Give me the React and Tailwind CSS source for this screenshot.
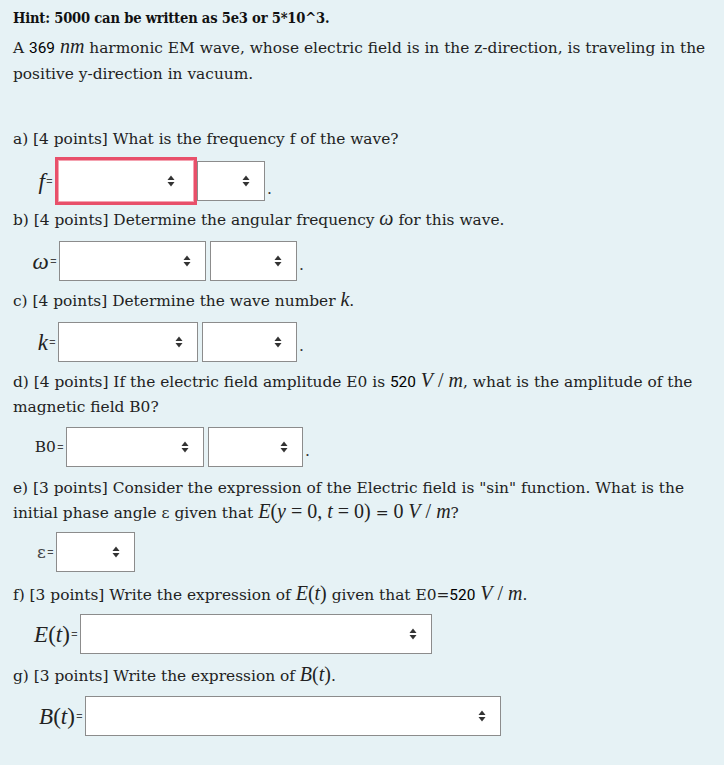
import React from 'react';

const serif = { fontFamily: '"DejaVu Serif", "Liberation Serif", serif' };
const mathFont = { fontFamily: '"Liberation Serif", "DejaVu Serif", serif' };

function Arrows() {
  return (
    <svg width="8" height="12" viewBox="0 0 8 12" className="shrink-0">
      <path d="M4 0.5 L7.5 5 L0.5 5 Z" fill="#333" />
      <path d="M4 11.5 L7.5 7 L0.5 7 Z" fill="#333" />
    </svg>
  );
}

function Select({ w, error }) {
  return (
    <div
      className={
        'flex items-center justify-end bg-white shrink-0 ' +
        (error
          ? 'h-[48px] border-[3px] border-[#e8506a] pr-[19px] shadow-[inset_0_0_0_1px_#f4a3b1]'
          : 'h-10 border border-[#8c8c8c] pr-[14px]')
      }
      style={{ width: w }}
    >
      <Arrows />
    </div>
  );
}

// math pieces (KaTeX-like)
function M({ children }) {
  return <span className="italic text-[20px] leading-none" style={mathFont}>{children}</span>;
}
function R({ children }) {
  return <span className="text-[20px] leading-none" style={mathFont}>{children}</span>;
}
function VM() {
  return (
    <span className="text-[20px] leading-none" style={mathFont}>
      <i>V</i> / <i>m</i>
    </span>
  );
}
// bigger math for the answer labels
function LM({ children }) {
  return <span className="italic text-[23px] leading-none" style={mathFont}>{children}</span>;
}
function LR({ children }) {
  return <span className="text-[23px] leading-none" style={mathFont}>{children}</span>;
}

function Num({ children }) {
  return <span className="text-black" style={{ fontFamily: 'Roboto, "Liberation Sans", sans-serif' }}>{children}</span>;
}

const eq = <span className="text-[13px] text-[#444] ml-[1px]" style={{ fontFamily: 'Roboto, sans-serif' }}>=</span>;

function Row({ label, labelW, className, children }) {
  return (
    <div className={'flex items-center ' + (className || '')}>
      <span className="flex items-center justify-end shrink-0 mr-[2px] whitespace-nowrap" style={{ width: labelW }}>
        {label}
      </span>
      {children}
    </div>
  );
}

function Dot() {
  return <span className="ml-[2px] self-end mb-[8px] leading-none text-[#333]">.</span>;
}

export default function App() {
  return (
    <div className="min-h-screen bg-[#e6f2f5] text-[#222] text-[15.4px] leading-[25px] pl-[13px] pr-2 pt-[5px] pb-6" style={serif}>
      <p className="font-bold text-[#111] font-stretch-condensed text-[14.6px] tracking-[-0.2px]">Hint: 5000 can be written as 5e3 or 5*10^3.</p>
      <p className="mt-[5px] leading-[26px]">
        A <Num>369</Num> <M>nm</M> harmonic EM wave, whose electric field is in the z-direction, is traveling in the positive y-direction in vacuum.
      </p>

      <p className="mt-[40px]">a) [4 points] What is the frequency f of the wave?</p>
      <Row className="mt-[5px]" labelW={40} label={<><LM>f</LM>{eq}</>}>
        <Select w={142} error />
        <Select w={68} />
        <Dot />
      </Row>

      <p className="mt-[3px]">b) [4 points] Determine the angular frequency <M>ω</M> for this wave.</p>
      <Row className="mt-[8px]" labelW={44} label={<><LM>ω</LM>{eq}</>}>
        <Select w={147} />
        <div className="w-1 shrink-0" />
        <Select w={87} />
        <Dot />
      </Row>

      <p className="mt-[8px]">c) [4 points] Determine the wave number <M>k</M>.</p>
      <Row className="mt-[8px]" labelW={43} label={<><LM>k</LM>{eq}</>}>
        <Select w={140} />
        <div className="w-1 shrink-0" />
        <Select w={95} />
        <Dot />
      </Row>

      <p className="mt-[8px]">
        d) [4 points] If the electric field amplitude E0 is <Num>520</Num> <VM />, what is the amplitude of the magnetic field B0?
      </p>
      <Row className="mt-[7px]" labelW={51} label={<>B0{eq}</>}>
        <Select w={138} />
        <div className="w-1 shrink-0" />
        <Select w={95} />
        <Dot />
      </Row>

      <p className="mt-[9px]">
        e) [3 points] Consider the expression of the Electric field is "sin" function. What is the initial phase angle ε given that{' '}
        <M>E</M>
        <R>
          (<i>y</i> = 0, <i>t</i> = 0)
        </R>{' '}
        = <R>0</R> <VM />?
      </p>
      <Row className="mt-[6px]" labelW={41} label={<><span className="text-[#444] text-[17px]">ε</span>{eq}</>}>
        <Select w={79} />
      </Row>

      <p className="mt-[11px]">
        f) [3 points] Write the expression of <M>E</M>
        <R>
          (<i>t</i>)
        </R>{' '}
        given that E0=<Num>520</Num> <VM />.
      </p>
      <Row className="mt-[6px]" labelW={65} label={<><LM>E</LM><LR>(<i>t</i>)</LR>{eq}</>}>
        <Select w={352} />
      </Row>

      <p className="mt-[10px]">
        g) [3 points] Write the expression of <M>B</M>
        <R>
          (<i>t</i>)
        </R>
        .
      </p>
      <Row className="mt-[7px]" labelW={70} label={<><LM>B</LM><LR>(<i>t</i>)</LR>{eq}</>}>
        <Select w={416} />
      </Row>
    </div>
  );
}
